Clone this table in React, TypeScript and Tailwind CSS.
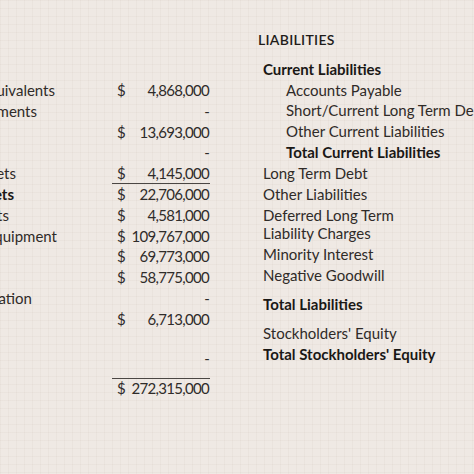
import React from "react";

type Row = { label: string; pr: number; bold?: boolean; amount?: string; dash?: boolean; lineBelow?: boolean };

const left: Row[] = [
  { label: "Cash And Cash Equivalents", pr: 57, amount: "4,868,000" },
  { label: "Short Term Investments", pr: 75, dash: true },
  { label: "Net Receivables", pr: 130, amount: "13,693,000" },
  { label: "Inventory", pr: 180, dash: true },
  { label: "Other Current Assets", pr: 96, amount: "4,145,000", lineBelow: true },
  { label: "Total Current Assets", pr: 98, bold: true, amount: "22,706,000" },
  { label: "Long Term Investments", pr: 103, amount: "4,581,000" },
  { label: "Property Plant and Equipment", pr: 55, amount: "109,767,000" },
  { label: "Goodwill", pr: 190, amount: "69,773,000" },
  { label: "Intangible Assets", pr: 135, amount: "58,775,000" },
  { label: "Accumulated Amortization", pr: 80, dash: true },
  { label: "Other Assets", pr: 160, amount: "6,713,000" },
];

const num = "text-[15px] tracking-[-0.7px] text-[#2f2c2a]";
const dol = "text-[15px] text-[#2f2c2a]";

function LeftRow({ r }: { r: Row }) {
  return (
    <div className="flex h-[20.8px] items-center">
      <div
        className={`w-[330px] shrink-0 overflow-hidden whitespace-nowrap text-right ${r.bold ? "font-bold text-[#1a1816]" : "text-[#2f2b28]"}`}
        style={{ paddingRight: r.pr }}
      >
        {r.label}
      </div>
      <div className={`flex w-[98px] items-center self-stretch ${r.lineBelow ? "border-b border-[#4a4643]" : ""}`}>
        <span className={`w-[16px] pl-[5px] ${dol}`}>{r.amount ? "$" : ""}</span>
        <span className={`flex-1 pr-[1px] text-right ${num}`}>{r.amount ? r.amount : r.dash ? "-" : ""}</span>
      </div>
    </div>
  );
}

function R({ children, indent, bold, className = "" }: { children: React.ReactNode; indent?: boolean; bold?: boolean; className?: string }) {
  return (
    <div
      className={`whitespace-nowrap ${indent ? "pl-[28px]" : "pl-[5px]"} ${bold ? "font-bold text-[#1a1816]" : "text-[#2f2b28]"} ${className}`}
    >
      {children}
    </div>
  );
}

export default function App() {
  return (
    <div
      className="relative h-[474px] w-[474px] overflow-hidden bg-[#efe9e4] text-[15px] leading-[20.8px] bg-[linear-gradient(to_right,rgba(180,160,150,0.08)_1px,transparent_1px),linear-gradient(to_bottom,rgba(180,160,150,0.08)_1px,transparent_1px)] bg-[size:8px_8px]"
      style={{ fontFamily: "Lato, 'Open Sans', sans-serif" }}
    >
      <div className="flex">
        <div className="ml-[-218px] shrink-0 pt-[80px]">
          {left.map((r) => (
            <LeftRow key={r.label} r={r} />
          ))}
          <div className="flex h-[20px] items-center" />
          <div className="flex h-[18px] items-center">
            <div className="w-[330px] shrink-0" />
            <div className="flex w-[98px]">
              <span className={`flex-1 pr-[1px] text-right ${num}`}>-</span>
            </div>
          </div>
          <div className="h-[10px]" />
          <div className="flex h-[21px] items-center">
            <div className="w-[330px] shrink-0 whitespace-nowrap pr-[200px] text-right font-bold">Total Assets</div>
            <div className="flex w-[98px] items-center self-stretch border-t border-[#4a4643]">
              <span className={`w-[16px] pl-[5px] ${dol}`}>$</span>
              <span className={`flex-1 pr-[1px] text-right ${num}`}>272,315,000</span>
            </div>
          </div>
        </div>
        <div className="ml-[48px] shrink-0 pt-[30px]">
          <div className="text-[14px] font-semibold tracking-[0.3px] text-[#1f1c1a]">LIABILITIES</div>
          <div className="h-[8px]" />
          <R bold>Current Liabilities</R>
          <R indent>Accounts Payable</R>
          <R indent>Short/Current Long Term Debt</R>
          <R indent>Other Current Liabilities</R>
          <R indent bold>Total Current Liabilities</R>
          <R>Long Term Debt</R>
          <R>Other Liabilities</R>
          <R className="leading-[18px] pt-[2px]">Deferred Long Term</R>
          <R className="leading-[18px]">Liability Charges</R>
          <R className="pt-[2px]">Minority Interest</R>
          <R>Negative Goodwill</R>
          <R bold className="pt-[8px]">Total Liabilities</R>
          <R className="pt-[8px]">Stockholders' Equity</R>
          <R bold>Total Stockholders' Equity</R>
        </div>
      </div>
    </div>
  );
}
